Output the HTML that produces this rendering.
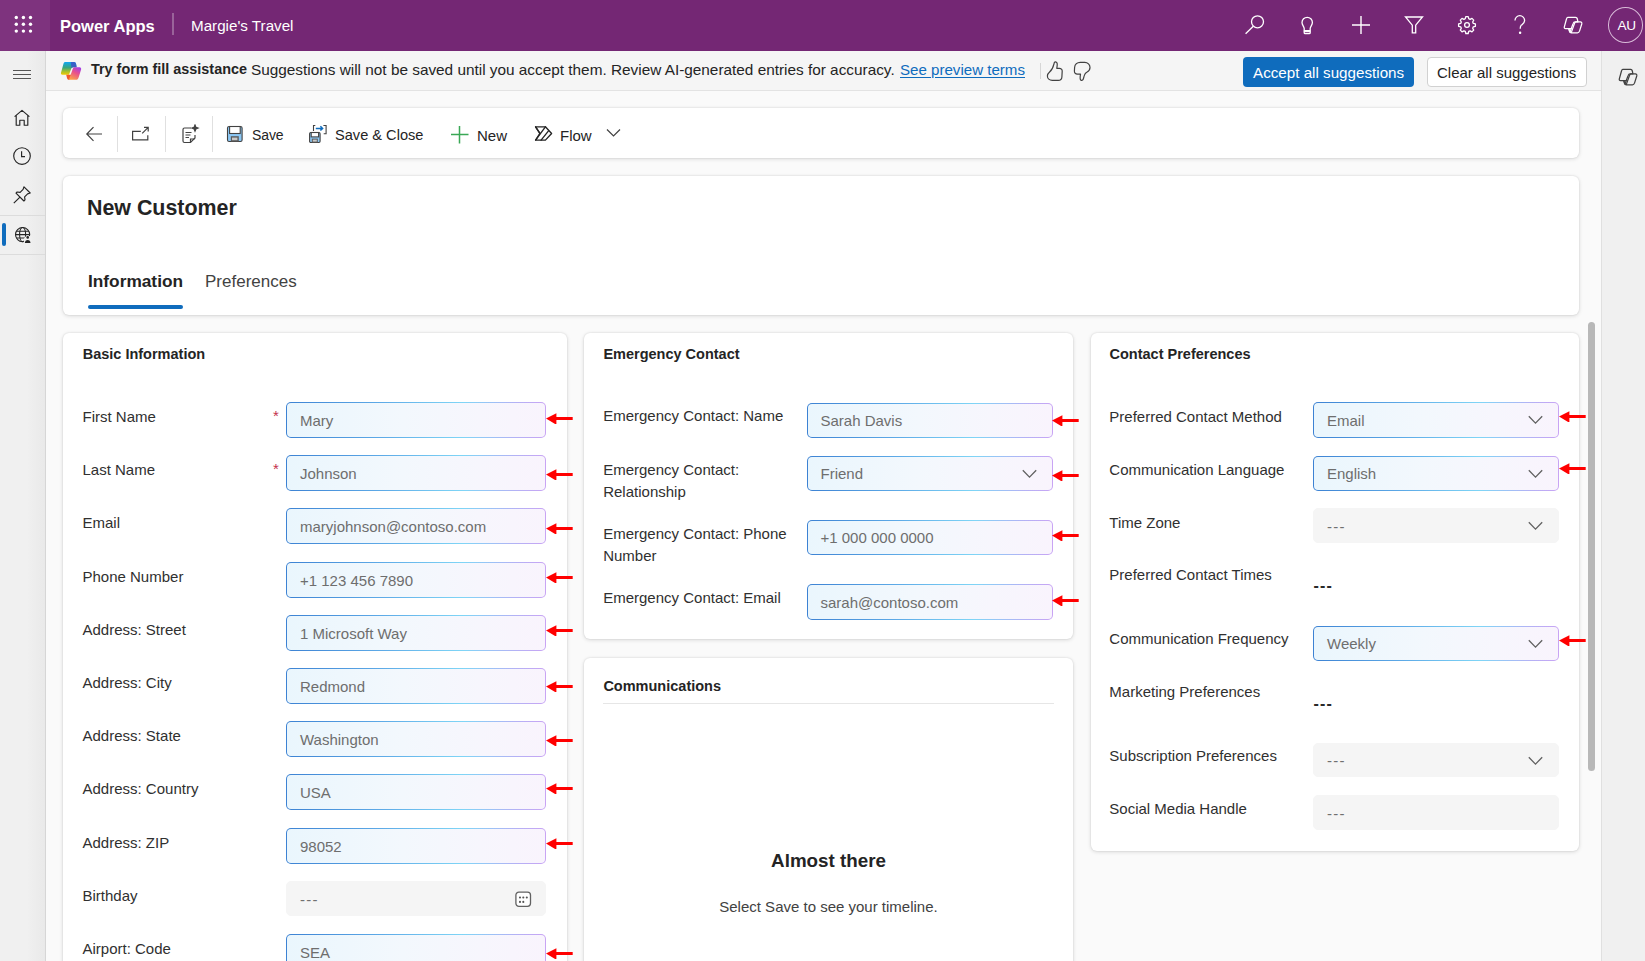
<!DOCTYPE html>
<html><head><meta charset="utf-8">
<style>
*{box-sizing:border-box;margin:0;padding:0}
html,body{width:1645px;height:961px;overflow:hidden}
body{font-family:"Liberation Sans",sans-serif;background:#fafafa;color:#242424;position:relative}
.abs{position:absolute}
#hdr{left:0;top:0;width:1645px;height:51px;background:#742774}
#waffle{left:0;top:0;width:50px;height:51px;background:#7e337e}
.t{position:absolute;white-space:nowrap;line-height:1}
#nav{left:0;top:51px;width:46px;height:910px;background:linear-gradient(90deg,#f0f0f0 60%,#e9e9e9);border-right:1px solid #d6d6d6}
#rp{left:1601px;top:51px;width:44px;height:910px;background:#f0f0f0;border-left:1px solid #e0e0e0}
#banner{left:46px;top:51px;width:1555px;height:40px;background:#f5f5f5;border-bottom:1px solid #e3e3e3}
.card{position:absolute;background:#fff;border-radius:6px;box-shadow:0 0 2px rgba(0,0,0,.12),0 1px 4px rgba(0,0,0,.13)}
.lbl{position:absolute;font-size:15px;color:#242424;white-space:nowrap;line-height:22px}
.inp{position:absolute;height:35.6px;border-radius:5px;border:1.5px solid transparent;
 background:linear-gradient(90deg,#eaf6fd,#f3f8fd 45%,#f7f6fd 75%,#f9f4fd) padding-box,linear-gradient(90deg,#3d82d3,#5ca8e6 35%,#7fd5f6 68%,#b3b2f5 88%,#c9a4f4) border-box;
 font-size:15px;color:#6e6e6e;padding-left:13px;line-height:33px;white-space:nowrap}
.inp.e{background:#f5f5f5;border-color:#f5f5f5;color:#707070;letter-spacing:1.3px;height:34.6px}
.arr{position:absolute;width:27px;height:11px}
.chev{position:absolute;right:15px;top:12px;width:15px;height:10px}
.sect{position:absolute;font-size:14.5px;font-weight:700;color:#242424;white-space:nowrap;line-height:1}
.star{position:absolute;color:#c4314b;font-size:15px;line-height:1}
.dash{position:absolute;font-size:16px;font-weight:700;color:#2a2a2a;line-height:1;letter-spacing:1.2px}
.v{position:absolute;left:13px;top:9.5px;line-height:1}
</style></head><body>

<!-- header -->
<div id="hdr" class="abs"></div>
<div id="waffle" class="abs"></div>
<svg class="abs" style="left:14px;top:15px" width="20" height="20" viewBox="0 0 20 20" fill="#fff"><circle cx="2.3" cy="2.5" r="1.7"/><circle cx="9.4" cy="2.5" r="1.7"/><circle cx="16.5" cy="2.5" r="1.7"/><circle cx="2.3" cy="9.3" r="1.7"/><circle cx="9.4" cy="9.3" r="1.7"/><circle cx="16.5" cy="9.3" r="1.7"/><circle cx="2.3" cy="16.1" r="1.7"/><circle cx="9.4" cy="16.1" r="1.7"/><circle cx="16.5" cy="16.1" r="1.7"/></svg>
<div class="t" style="left:60px;top:18px;font-size:16.5px;font-weight:700;color:#fff">Power Apps</div>
<div class="abs" style="left:172px;top:13px;width:2px;height:22px;background:rgba(255,255,255,.28)"></div>
<div class="t" style="left:191px;top:18px;font-size:15.2px;color:#fff">Margie's Travel</div>

<!-- header icons -->
<svg class="abs" style="left:1240px;top:10px" width="30" height="30" viewBox="0 0 30 30" fill="none" stroke="#fff" stroke-width="1.3">
<circle cx="17.5" cy="11.8" r="6"/><path d="M13.3 16.2 L5.6 23.8"/></svg>
<svg class="abs" style="left:1292px;top:10px" width="30" height="30" viewBox="0 0 30 30" fill="none" stroke="#fff" stroke-width="1.3">
<path d="M10 12.5a5.2 5.2 0 1 1 10.4 0c0 2.5-1.8 3.6-2.2 5.8v2.3h-6v-2.3c-.4-2.2-2.2-3.3-2.2-5.8z"/><path d="M12.2 21.5h6v1.2a1 1 0 0 1-1 1h-4a1 1 0 0 1-1-1z"/></svg>
<svg class="abs" style="left:1346px;top:10px" width="30" height="30" viewBox="0 0 30 30" fill="none" stroke="#fff" stroke-width="1.4">
<path d="M15 6v18M6 15h18"/></svg>
<svg class="abs" style="left:1399px;top:10px" width="30" height="30" viewBox="0 0 30 30" fill="none" stroke="#fff" stroke-width="1.3">
<path d="M6.5 7h17l-6.8 8.2v7.6h-3.4v-7.6z"/></svg>
<svg class="abs" style="left:1452px;top:10px" width="30" height="30" viewBox="0 0 30 30" fill="none" stroke="#fff" stroke-width="1.3">
<path d="M13.8 6.6h2.4l.5 2.1 1.4.7 1.9-1 1.7 1.7-1 1.9.6 1.4 2.1.5v2.4l-2.1.5-.6 1.4 1 1.9-1.7 1.7-1.9-1-1.4.6-.5 2.1h-2.4l-.5-2.1-1.4-.6-1.9 1-1.7-1.7 1-1.9-.6-1.4-2.1-.5v-2.4l2.1-.5.6-1.4-1-1.9 1.7-1.7 1.9 1 1.4-.7z" stroke-linejoin="round"/><circle cx="15" cy="15" r="2.4"/></svg>
<svg class="abs" style="left:1505px;top:10px" width="30" height="30" viewBox="0 0 30 30" fill="none" stroke="#fff" stroke-width="1.3">
<path d="M10 10.5a4.8 4.8 0 0 1 9.6 0c0 2.4-1.6 3.2-3.2 4.6-.9.8-1.2 1.6-1.2 3.6"/><circle cx="15.1" cy="22.8" r=".6" fill="#fff"/></svg>
<svg class="abs" style="left:1560.2px;top:13.8px" width="26" height="23" viewBox="0 0 30 26.5" fill="none" stroke="#fff" stroke-width="1.45" stroke-linejoin="round"><path d="M9 4H18C19.5 4 20 5 20.3 7L20.6 9.2H17.5C16.2 9.2 15.5 9.9 15.1 11.1L13 16.8H6.4C5.2 16.8 4.7 16 5 14.8L7.4 6C7.8 4.8 8.2 4 9 4Z"/><path d="M10.2 16.8H13L11.6 21C11.3 20.6 11.1 20.3 11 20Z"/><path d="M18.6 9.2H23.6C24.9 9.2 25.4 10.2 25.1 11.5L22.6 19.5C22.1 21 21.4 21.8 20.1 21.8H12.9C12 21.8 11.4 21 11.1 20.2L10.2 16.8M12.9 21.8L16.7 11C17.1 9.8 17.6 9.2 18.6 9.2"/></svg>
<div class="abs" style="left:1607.5px;top:7px;width:35.5px;height:36px;border-radius:50%;border:1px solid #d9bcd9"></div>
<div class="t" style="left:1617.5px;top:18.8px;font-size:13.6px;letter-spacing:-0.4px;color:#fff">AU</div>

<!-- left nav -->
<div id="nav" class="abs"></div>
<svg class="abs" style="left:12px;top:69px" width="20" height="12" viewBox="0 0 20 12" stroke="#555" stroke-width="1"><path d="M1 1.5h18M1 5.5h18M1 9.5h18"/></svg>
<svg class="abs" style="left:13px;top:109px" width="18" height="18" viewBox="0 0 18 18" fill="none" stroke="#242424" stroke-width="1.15" stroke-linejoin="round"><path d="M1.6 7.6L9 1.4l7.4 6.2M3.2 6.3V16.2h3.6v-5h4.4v5h3.6V6.3"/></svg>
<svg class="abs" style="left:12px;top:146px" width="20" height="20" viewBox="0 0 20 20" fill="none" stroke="#242424" stroke-width="1.15"><circle cx="10" cy="10" r="8.3"/><path d="M9.6 5.2v5.4h3.4"/></svg>
<svg class="abs" style="left:12px;top:185px" width="20" height="20" viewBox="0 0 20 20" fill="none" stroke="#242424" stroke-width="1.15" stroke-linejoin="round"><path d="M12 1.8L18.2 8L15.6 8.9L12.6 11.9L13 14.9L11.9 16L4 8.1L5.1 7L8.1 7.4L11.1 4.4Z M7.7 12.3L1.8 18.2"/></svg>
<div class="abs" style="left:0;top:215px;width:45px;height:1px;background:#dcdcdc"></div>
<div class="abs" style="left:2px;top:223px;width:4px;height:23px;border-radius:2px;background:#0f6cbd"></div>
<svg class="abs" style="left:14px;top:226px" width="18" height="18" viewBox="0 0 18 18" fill="none" stroke="#242424" stroke-width="1.1"><circle cx="8.6" cy="8.6" r="7.1"/><ellipse cx="8.6" cy="8.6" rx="3" ry="7.1"/><path d="M1.5 8.6h14.2M2.4 5.2h12.4M2.4 12h12.4"/><circle cx="14" cy="14" r="4.3" fill="#f0f0f0" stroke="none"/><circle cx="13.7" cy="11.4" r="1.3" fill="#242424" stroke="none"/><path d="M10.9 16.9c0-1.9 1.2-3 2.8-3s2.8 1.1 2.8 3z" fill="#242424" stroke="none"/></svg>
<div class="abs" style="left:0;top:254px;width:45px;height:1px;background:#dcdcdc"></div>

<!-- right panel -->
<div id="rp" class="abs"></div>

<!-- banner -->
<div id="banner" class="abs"></div>
<svg class="abs" style="left:56px;top:58px" width="30" height="26" viewBox="0 0 30 26">
<defs>
<linearGradient id="cg1" x1="0" y1="0" x2="0" y2="1"><stop offset="0" stop-color="#0ea5f3"/><stop offset=".45" stop-color="#3aa57a"/><stop offset=".7" stop-color="#9bbd34"/><stop offset="1" stop-color="#f3cb00"/></linearGradient>
<linearGradient id="cg2" x1="0.8" y1="0" x2="0.3" y2="1"><stop offset="0" stop-color="#a23fe8"/><stop offset=".45" stop-color="#e8508c"/><stop offset="1" stop-color="#fba04a"/></linearGradient>
</defs>
<path d="M9 4H18C19.5 4 20 5 20.3 7L20.6 9.2H17.5C16.2 9.2 15.5 9.9 15.1 11.1L13 16.8H6.4C5.2 16.8 4.7 16 5 14.8L7.4 6C7.8 4.8 8.2 4 9 4Z" fill="url(#cg1)"/>
<path d="M15.6 4H18C19.5 4 20 5 20.3 7L20.6 9.2H17.5C16.5 9.2 16 9.5 15.5 10L14.8 4.5Z" fill="#3c55c8" opacity=".85"/>
<path d="M10.2 16.8H15.6L13.6 21.8H12.8C11.8 21.8 11.3 21 11 20Z" fill="#f2582c"/>
<path d="M18.6 9.2H23.6C24.9 9.2 25.4 10.2 25.1 11.5L22.6 19.5C22.1 21 21.4 21.8 20.1 21.8H12.9L16.7 11C17.1 9.8 17.6 9.2 18.6 9.2Z" fill="url(#cg2)"/>
</svg>
<div class="t" style="left:91px;top:62.3px;font-size:14.4px;font-weight:700;color:#242424">Try form fill assistance</div>
<div class="t" style="left:251px;top:61.7px;font-size:15.35px;color:#242424">Suggestions will not be saved until you accept them. Review AI-generated entries for accuracy.</div>
<div class="t" style="left:900px;top:61.7px;font-size:15.1px;color:#0f6cbd;text-decoration:underline;text-underline-offset:2px">See preview terms</div>
<div class="abs" style="left:1040px;top:63px;width:1px;height:16px;background:#d6d6d6"></div>
<svg class="abs" style="left:1045px;top:60px" width="20" height="22" viewBox="0 0 20 22" fill="none" stroke="#424242" stroke-width="1.2" stroke-linejoin="round">
<path d="M9.8 2.1c1.2-.6 2.2.3 2.4 1.6.2 1.4-.2 3-.4 4.6h2.6c1.6 0 2.9 1.2 2.8 2.8l-.3 5.9c-.1 2-1.7 3.4-3.7 3.4H7.3C4.5 20.4 2.4 18.5 2.4 16c0-1.6.9-2.9 2.2-4C6.9 10 8.3 6.7 9 3.8c.1-.7.3-1.4.8-1.7z"/></svg>
<svg class="abs" style="left:1072px;top:60px" width="20" height="22" viewBox="0 0 20 22" fill="none" stroke="#424242" stroke-width="1.2" stroke-linejoin="round">
<path d="M10.3 20.3c-1 .4-1.9-.3-2.1-1.4-.3-1.5.1-3.2.3-4.8H5.3c-1.7 0-3-1.3-2.9-3l.2-3.6C2.8 4.5 5.2 2.3 8.2 2.3h4.6c2.9 0 5.2 2.3 5.2 5.2 0 2.5-1.5 3.9-3.2 4.7-1.5.7-2.6 3-3.2 5.8-.2 1-.5 2-1.3 2.3z"/></svg>
<div class="abs" style="left:1243px;top:56.5px;width:171px;height:30.2px;border-radius:4px;background:#0f6cbd"></div>
<div class="t" style="left:1253px;top:64.5px;font-size:15.2px;color:#fff">Accept all suggestions</div>
<div class="abs" style="left:1427px;top:56.5px;width:160px;height:30.2px;border-radius:4px;background:#fff;border:1px solid #d1d1d1"></div>
<div class="t" style="left:1437px;top:64.5px;font-size:15px;color:#242424">Clear all suggestions</div>
<svg class="abs" style="left:1614.5px;top:65.5px" width="26" height="23" viewBox="0 0 30 26.5" fill="none" stroke="#424242" stroke-width="1.45" stroke-linejoin="round"><path d="M9 4H18C19.5 4 20 5 20.3 7L20.6 9.2H17.5C16.2 9.2 15.5 9.9 15.1 11.1L13 16.8H6.4C5.2 16.8 4.7 16 5 14.8L7.4 6C7.8 4.8 8.2 4 9 4Z"/><path d="M10.2 16.8H13L11.6 21C11.3 20.6 11.1 20.3 11 20Z"/><path d="M18.6 9.2H23.6C24.9 9.2 25.4 10.2 25.1 11.5L22.6 19.5C22.1 21 21.4 21.8 20.1 21.8H12.9C12 21.8 11.4 21 11.1 20.2L10.2 16.8M12.9 21.8L16.7 11C17.1 9.8 17.6 9.2 18.6 9.2"/></svg>

<!-- command bar -->
<div class="card" style="left:63px;top:108px;width:1516px;height:50px"></div>
<svg class="abs" style="left:85px;top:125px" width="18" height="18" viewBox="0 0 18 18" fill="none" stroke="#424242" stroke-width="1.2"><path d="M17 9H2M8.5 2.2L1.8 9l6.7 6.8"/></svg>
<div class="abs" style="left:117px;top:116px;width:1px;height:36px;background:#e0e0e0"></div>
<svg class="abs" style="left:131px;top:125px" width="20" height="18" viewBox="0 0 20 18" fill="none" stroke="#424242" stroke-width="1.2"><path d="M9.8 6.4H1.6v8.4h15.2v-4.6M13 2.3h4.2v4.2M17.2 2.3l-6 6"/></svg>
<div class="abs" style="left:165px;top:116px;width:1px;height:36px;background:#e0e0e0"></div>
<svg class="abs" style="left:180px;top:124px" width="20" height="20" viewBox="0 0 20 20" fill="none" stroke="#424242" stroke-width="1.2"><path d="M11 4H4.5c-1 0-1.5.5-1.5 1.5v11.5c0 1 .5 1.5 1.5 1.5h6l4.5-4.5V11"/><path d="M5.5 8.5h6M5.5 11h5M5.5 13.5h3.5M10.5 18.5v-3.5h4"/><path d="M15 1l.9 2.2 2.2.9-2.2.9L15 7.2l-.9-2.2-2.2-.9 2.2-.9z" fill="#424242"/></svg>
<div class="abs" style="left:212px;top:116px;width:1px;height:36px;background:#e0e0e0"></div>
<svg class="abs" style="left:226px;top:125px" width="18" height="18" viewBox="0 0 18 18">
<rect x="1.5" y="1.5" width="14.6" height="15" rx="1.6" fill="#8cc8f5" stroke="#424242" stroke-width="1.1"/>
<rect x="3.6" y="1.5" width="10.6" height="7" fill="#fff" stroke="#424242" stroke-width="1.1"/>
<rect x="4.8" y="11.2" width="8" height="5.3" fill="#5c5c5c"/><rect x="6" y="12.6" width="5.4" height="2.6" fill="#c8c8c8"/></svg>
<div class="t" style="left:252px;top:128.3px;font-size:14px;letter-spacing:-0.1px;color:#242424">Save</div>
<svg class="abs" style="left:308px;top:124px" width="20" height="20" viewBox="0 0 20 20">
<path d="M5.5 7V1.5h1.8M15.4 1.5h2.7v8.2h-2.4" stroke="#424242" stroke-width="1.1" fill="none"/>
<path d="M7.8 4.4h6.2M12.4 2.3l2.2 2.1-2.2 2.1" stroke="#0f6cbd" stroke-width="1.5" fill="none"/>
<rect x="1.6" y="8.5" width="10.5" height="10" rx="1.2" fill="#8cc8f5" stroke="#424242" stroke-width="1.1"/>
<rect x="3.2" y="8.5" width="7.4" height="4.4" fill="#fff" stroke="#424242" stroke-width="1.1"/>
<rect x="3.8" y="14.6" width="6" height="3.9" fill="#5c5c5c"/><rect x="4.8" y="15.6" width="4" height="2" fill="#c8c8c8"/></svg>
<div class="t" style="left:335px;top:128px;font-size:14.6px;color:#242424">Save &amp; Close</div>
<svg class="abs" style="left:450px;top:125px" width="19" height="19" viewBox="0 0 19 19" fill="none" stroke="#3aa856" stroke-width="1.5"><path d="M9.5 1v17.5M1 9.5h17.5"/></svg>
<div class="t" style="left:477px;top:128px;font-size:15px;color:#242424">New</div>
<svg class="abs" style="left:528px;top:120px" width="32" height="28" viewBox="0 0 32 28" fill="none" stroke="#242424" stroke-width="1.35" stroke-linejoin="round" stroke-linecap="round"><path d="M7.6 6.8H17.4L23.6 13.5L17.4 20.1H7.6L11.9 13.4Z"/><path d="M7.6 6.8L11.9 13.4M17.4 6.8L7.6 20.1M20.5 10.9L13.1 20.1"/></svg>
<div class="t" style="left:560px;top:128px;font-size:15px;color:#242424">Flow</div>
<svg class="abs" style="left:606px;top:128px" width="15" height="10" viewBox="0 0 15 10" fill="none" stroke="#424242" stroke-width="1.2"><path d="M1 1.5l6.5 6.5 6.5-6.5"/></svg>

<!-- header card -->
<div class="card" style="left:63px;top:176px;width:1516px;height:139px"></div>
<div class="t" style="left:87px;top:198.2px;font-size:21.4px;font-weight:700;color:#242424">New Customer</div>
<div class="t" style="left:88px;top:273px;font-size:17.3px;font-weight:700;color:#242424">Information</div>
<div class="t" style="left:205px;top:273px;font-size:17px;color:#424242">Preferences</div>
<div class="abs" style="left:88px;top:305px;width:95px;height:4px;border-radius:2px;background:#0f6cbd"></div>

<!-- cards -->
<div class="card" style="left:63px;top:333px;width:504px;height:700px"></div>
<div class="card" style="left:584px;top:333px;width:489px;height:306px"></div>
<div class="card" style="left:584px;top:658px;width:489px;height:400px"></div>
<div class="card" style="left:1091px;top:333px;width:488px;height:518px"></div>









<!-- FORM -->
<div class="sect" style="left:82.7px;top:347px">Basic Information</div>
<div class="t" style="left:82.5px;top:408.7px;font-size:15px;color:#303030">First Name</div>
<div class="star" style="left:273px;top:407.5px">*</div>
<div class="inp" style="left:286px;top:402.0px;width:260px"><span class="v">Mary</span></div>
<svg class="abs" style="left:545.7px;top:412.7px" width="27" height="11" viewBox="0 0 27 11"><path d="M0 5.5L10.4 0.2V4h16.3v3H10.4v4.8z" fill="#f00"/></svg>
<div class="t" style="left:82.5px;top:461.7px;font-size:15px;color:#303030">Last Name</div>
<div class="star" style="left:273px;top:460.5px">*</div>
<div class="inp" style="left:286px;top:455.0px;width:260px"><span class="v">Johnson</span></div>
<svg class="abs" style="left:545.7px;top:468.8px" width="27" height="11" viewBox="0 0 27 11"><path d="M0 5.5L10.4 0.2V4h16.3v3H10.4v4.8z" fill="#f00"/></svg>
<div class="t" style="left:82.5px;top:514.7px;font-size:15px;color:#303030">Email</div>
<div class="inp" style="left:286px;top:508.0px;width:260px"><span class="v">maryjohnson@contoso.com</span></div>
<svg class="abs" style="left:545.7px;top:522.7px" width="27" height="11" viewBox="0 0 27 11"><path d="M0 5.5L10.4 0.2V4h16.3v3H10.4v4.8z" fill="#f00"/></svg>
<div class="t" style="left:82.5px;top:568.7px;font-size:15px;color:#303030">Phone Number</div>
<div class="inp" style="left:286px;top:562.0px;width:260px"><span class="v">+1 123 456 7890</span></div>
<svg class="abs" style="left:545.7px;top:571.7px" width="27" height="11" viewBox="0 0 27 11"><path d="M0 5.5L10.4 0.2V4h16.3v3H10.4v4.8z" fill="#f00"/></svg>
<div class="t" style="left:82.5px;top:621.7px;font-size:15px;color:#303030">Address: Street</div>
<div class="inp" style="left:286px;top:615.0px;width:260px"><span class="v">1 Microsoft Way</span></div>
<svg class="abs" style="left:545.7px;top:624.8px" width="27" height="11" viewBox="0 0 27 11"><path d="M0 5.5L10.4 0.2V4h16.3v3H10.4v4.8z" fill="#f00"/></svg>
<div class="t" style="left:82.5px;top:674.7px;font-size:15px;color:#303030">Address: City</div>
<div class="inp" style="left:286px;top:668.0px;width:260px"><span class="v">Redmond</span></div>
<svg class="abs" style="left:545.7px;top:680.6px" width="27" height="11" viewBox="0 0 27 11"><path d="M0 5.5L10.4 0.2V4h16.3v3H10.4v4.8z" fill="#f00"/></svg>
<div class="t" style="left:82.5px;top:727.7px;font-size:15px;color:#303030">Address: State</div>
<div class="inp" style="left:286px;top:721.0px;width:260px"><span class="v">Washington</span></div>
<svg class="abs" style="left:545.7px;top:734.7px" width="27" height="11" viewBox="0 0 27 11"><path d="M0 5.5L10.4 0.2V4h16.3v3H10.4v4.8z" fill="#f00"/></svg>
<div class="t" style="left:82.5px;top:780.7px;font-size:15px;color:#303030">Address: Country</div>
<div class="inp" style="left:286px;top:774.0px;width:260px"><span class="v">USA</span></div>
<svg class="abs" style="left:545.7px;top:782.7px" width="27" height="11" viewBox="0 0 27 11"><path d="M0 5.5L10.4 0.2V4h16.3v3H10.4v4.8z" fill="#f00"/></svg>
<div class="t" style="left:82.5px;top:834.7px;font-size:15px;color:#303030">Address: ZIP</div>
<div class="inp" style="left:286px;top:828.0px;width:260px"><span class="v">98052</span></div>
<svg class="abs" style="left:545.7px;top:837.7px" width="27" height="11" viewBox="0 0 27 11"><path d="M0 5.5L10.4 0.2V4h16.3v3H10.4v4.8z" fill="#f00"/></svg>
<div class="t" style="left:82.5px;top:887.7px;font-size:15px;color:#303030">Birthday</div>
<div class="inp e" style="left:286px;top:881.0px;width:260px"><span class="v">---</span></div>
<svg class="abs" style="left:514px;top:889.7px" width="18" height="18" viewBox="0 0 18 18"><rect x="1.9" y="2.1" width="14.6" height="14.2" rx="3" fill="#fff" stroke="#616161" stroke-width="1.3"/><g fill="#555"><circle cx="6" cy="7.5" r="1.05"/><circle cx="9.3" cy="7.5" r="1.05"/><circle cx="12.8" cy="7.5" r="1.05"/><circle cx="6" cy="11.9" r="1.05"/><circle cx="9.3" cy="11.9" r="1.05"/></g></svg>
<div class="t" style="left:82.5px;top:940.7px;font-size:15px;color:#303030">Airport: Code</div>
<div class="inp" style="left:286px;top:934.0px;width:260px"><span class="v">SEA</span></div>
<svg class="abs" style="left:545.7px;top:947.7px" width="27" height="11" viewBox="0 0 27 11"><path d="M0 5.5L10.4 0.2V4h16.3v3H10.4v4.8z" fill="#f00"/></svg>
<div class="sect" style="left:603.4px;top:347px">Emergency Contact</div>
<div class="t" style="left:603.2px;top:408.0px;font-size:15px;color:#303030">Emergency Contact: Name</div>
<div class="inp" style="left:806.5px;top:402.5px;width:246px"><span class="v">Sarah Davis</span></div>
<svg class="abs" style="left:1052.2px;top:414.9px" width="27" height="11" viewBox="0 0 27 11"><path d="M0 5.5L10.4 0.2V4h16.3v3H10.4v4.8z" fill="#f00"/></svg>
<div class="t" style="left:603.2px;top:462.0px;font-size:15px;color:#303030">Emergency Contact:</div>
<div class="t" style="left:603.2px;top:484.0px;font-size:15px;color:#303030">Relationship</div>
<div class="inp" style="left:806.5px;top:455.6px;width:246px"><span class="v">Friend</span><svg class="chev" viewBox="0 0 15 10" fill="none" stroke="#616161" stroke-width="1.3"><path d="M0.8 1.2l6.7 6.9 6.7-6.9"/></svg></div>
<svg class="abs" style="left:1052.2px;top:470.0px" width="27" height="11" viewBox="0 0 27 11"><path d="M0 5.5L10.4 0.2V4h16.3v3H10.4v4.8z" fill="#f00"/></svg>
<div class="t" style="left:603.2px;top:526.0px;font-size:15px;color:#303030">Emergency Contact: Phone</div>
<div class="t" style="left:603.2px;top:548.0px;font-size:15px;color:#303030">Number</div>
<div class="inp" style="left:806.5px;top:519.9px;width:246px"><span class="v">+1 000 000 0000</span></div>
<svg class="abs" style="left:1052.2px;top:529.8px" width="27" height="11" viewBox="0 0 27 11"><path d="M0 5.5L10.4 0.2V4h16.3v3H10.4v4.8z" fill="#f00"/></svg>
<div class="t" style="left:603.2px;top:590.3px;font-size:15px;color:#303030">Emergency Contact: Email</div>
<div class="inp" style="left:806.5px;top:584.2px;width:246px"><span class="v">sarah@contoso.com</span></div>
<svg class="abs" style="left:1052.2px;top:594.6px" width="27" height="11" viewBox="0 0 27 11"><path d="M0 5.5L10.4 0.2V4h16.3v3H10.4v4.8z" fill="#f00"/></svg>
<div class="sect" style="left:603.4px;top:678.5px">Communications</div>
<div class="abs" style="left:603px;top:703px;width:451px;height:1px;background:#e6e6e6"></div>
<div class="t" style="left:584px;width:489px;text-align:center;top:851.5px;font-size:18.8px;font-weight:700;color:#242424">Almost there</div>
<div class="t" style="left:584px;width:489px;text-align:center;top:898.5px;font-size:15px;color:#424242">Select Save to see your timeline.</div>
<div class="sect" style="left:1109.5px;top:347px">Contact Preferences</div>
<div class="t" style="left:1109.3px;top:409.0px;font-size:15px;color:#303030">Preferred Contact Method</div>
<div class="inp" style="left:1313px;top:402.4px;width:245.5px"><span class="v">Email</span><svg class="chev" viewBox="0 0 15 10" fill="none" stroke="#616161" stroke-width="1.3"><path d="M0.8 1.2l6.7 6.9 6.7-6.9"/></svg></div>
<svg class="abs" style="left:1559.1px;top:410.8px" width="27" height="11" viewBox="0 0 27 11"><path d="M0 5.5L10.4 0.2V4h16.3v3H10.4v4.8z" fill="#f00"/></svg>
<div class="t" style="left:1109.3px;top:462.0px;font-size:15px;color:#303030">Communication Language</div>
<div class="inp" style="left:1313px;top:455.6px;width:245.5px"><span class="v">English</span><svg class="chev" viewBox="0 0 15 10" fill="none" stroke="#616161" stroke-width="1.3"><path d="M0.8 1.2l6.7 6.9 6.7-6.9"/></svg></div>
<svg class="abs" style="left:1559.1px;top:462.8px" width="27" height="11" viewBox="0 0 27 11"><path d="M0 5.5L10.4 0.2V4h16.3v3H10.4v4.8z" fill="#f00"/></svg>
<div class="t" style="left:1109.3px;top:515.0px;font-size:15px;color:#303030">Time Zone</div>
<div class="inp e" style="left:1313px;top:508.2px;width:245.5px"><span class="v">---</span><svg class="chev" viewBox="0 0 15 10" fill="none" stroke="#616161" stroke-width="1.3"><path d="M0.8 1.2l6.7 6.9 6.7-6.9"/></svg></div>
<div class="t" style="left:1109.3px;top:567.0px;font-size:15px;color:#303030">Preferred Contact Times</div>
<div class="dash" style="left:1313.5px;top:578px">---</div>
<div class="t" style="left:1109.3px;top:631.0px;font-size:15px;color:#303030">Communication Frequency</div>
<div class="inp" style="left:1313px;top:625.5px;width:245.5px"><span class="v">Weekly</span><svg class="chev" viewBox="0 0 15 10" fill="none" stroke="#616161" stroke-width="1.3"><path d="M0.8 1.2l6.7 6.9 6.7-6.9"/></svg></div>
<svg class="abs" style="left:1559.1px;top:635.0px" width="27" height="11" viewBox="0 0 27 11"><path d="M0 5.5L10.4 0.2V4h16.3v3H10.4v4.8z" fill="#f00"/></svg>
<div class="t" style="left:1109.3px;top:684.4px;font-size:15px;color:#303030">Marketing Preferences</div>
<div class="dash" style="left:1313.5px;top:695.5px">---</div>
<div class="t" style="left:1109.3px;top:748.3px;font-size:15px;color:#303030">Subscription Preferences</div>
<div class="inp e" style="left:1313px;top:742.7px;width:245.5px"><span class="v">---</span><svg class="chev" viewBox="0 0 15 10" fill="none" stroke="#616161" stroke-width="1.3"><path d="M0.8 1.2l6.7 6.9 6.7-6.9"/></svg></div>
<div class="t" style="left:1109.3px;top:800.9px;font-size:15px;color:#303030">Social Media Handle</div>
<div class="inp e" style="left:1313px;top:795.3px;width:245.5px"><span class="v">---</span></div>
<div class="abs" style="left:1588px;top:322px;width:7px;height:449px;border-radius:3.5px;background:#b8b8b8"></div>
<!-- /FORM -->
</body></html>
